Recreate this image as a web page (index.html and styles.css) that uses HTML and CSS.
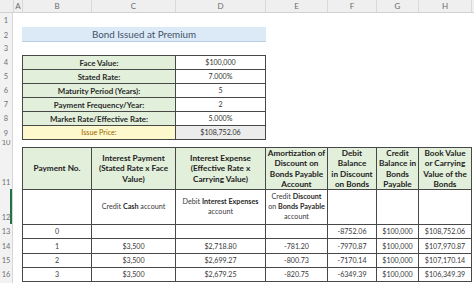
FILE: index.html
```html
<!DOCTYPE html>
<html>
<head>
<meta charset="utf-8">
<link rel="stylesheet" href="styles.css">
</head>
<body>
<div class="colhead">
  <div class="corner"></div>
  <div class="ch wa">A</div>
  <div class="ch wb">B</div>
  <div class="ch wc">C</div>
  <div class="ch wd">D</div>
  <div class="ch we">E</div>
  <div class="ch wf">F</div>
  <div class="ch wg">G</div>
  <div class="ch wh">H</div>
  <div class="ch wi"></div>
</div>
<div class="main">
  <div class="rowhead">
    <div class="rn r14">1</div>
    <div class="rn r15">2</div>
    <div class="rn r13">3</div>
    <div class="rn r14">4</div>
    <div class="rn r14">5</div>
    <div class="rn r14">6</div>
    <div class="rn r14">7</div>
    <div class="rn r14">8</div>
    <div class="rn r15">9</div>
    <div class="rn r7">10</div>
    <div class="rn r42">11</div>
    <div class="rn r35 sel">12</div>
    <div class="rn r14">13</div>
    <div class="rn r15">14</div>
    <div class="rn r14">15</div>
    <div class="rn r14">16</div>
    <div class="rn r14"></div>
  </div>
  <div class="sheet">
    <div class="title">Bond Issued at Premium</div>
    <div class="info">
      <div class="lbl">Face Value:</div><div class="val">$100,000</div>
      <div class="lbl">Stated Rate:</div><div class="val">7.000%</div>
      <div class="lbl">Maturity Period (Years):</div><div class="val">5</div>
      <div class="lbl">Payment Frequency/Year:</div><div class="val">2</div>
      <div class="lbl">Market Rate/Effective Rate:</div><div class="val">5.000%</div>
      <div class="lbl issue">Issue Price:</div><div class="val price">$108,752.06</div>
    </div>
    <div class="sched">
      <div class="hd">Payment No.</div>
      <div class="hd"><span>Interest Payment<br>(Stated Rate x Face<br>Value)</span></div>
      <div class="hd"><span>Interest Expense<br>(Effective Rate x<br>Carrying Value)</span></div>
      <div class="hd"><span>Amortization of<br>Discount on<br>Bonds Payable<br>Account</span></div>
      <div class="hd"><span>Debit<br>Balance<br>in Discount<br>on Bonds</span></div>
      <div class="hd"><span>Credit<br>Balance in<br>Bonds<br>Payable</span></div>
      <div class="hd"><span>Book Value<br>or Carrying<br>Value of the<br>Bonds</span></div>

      <div class="td"></div>
      <div class="td note"><span>Credit <b>Cash</b> account</span></div>
      <div class="td note"><span>Debit <b>Interest Expenses</b><br>account</span></div>
      <div class="td note"><span>Credit <b>Discount</b><br>on <b>Bonds Payable</b><br>account</span></div>
      <div class="td"></div>
      <div class="td"></div>
      <div class="td"></div>

      <div class="td">0</div><div class="td"></div><div class="td"></div><div class="td"></div><div class="td">-8752.06</div><div class="td">$100,000</div><div class="td">$108,752.06</div>
      <div class="td">1</div><div class="td">$3,500</div><div class="td">$2,718.80</div><div class="td">-781.20</div><div class="td">-7970.87</div><div class="td">$100,000</div><div class="td">$107,970.87</div>
      <div class="td">2</div><div class="td">$3,500</div><div class="td">$2,699.27</div><div class="td">-800.73</div><div class="td">-7170.14</div><div class="td">$100,000</div><div class="td">$107,170.14</div>
      <div class="td">3</div><div class="td">$3,500</div><div class="td">$2,679.25</div><div class="td">-820.75</div><div class="td">-6349.39</div><div class="td">$100,000</div><div class="td">$106,349.39</div>
    </div>
  </div>
</div>
</body>
</html>
```
FILE: styles.css
```css
* { box-sizing: border-box; }
html, body { margin: 0; padding: 0; }
body {
  width: 474px;
  height: 283px;
  overflow: hidden;
  background: #ffffff;
  font-family: "Lato", "Liberation Sans", sans-serif;
  color: #333333;
}
.colhead {
  display: flex;
  height: 13px;
  background: #efefef;
  border-bottom: 1px solid #d2d2d2;
}
.corner { width: 13px; flex: none; }
.ch {
  flex: none;
  height: 12px;
  border-left: 1px solid #d9d9d9;
  font-size: 8px;
  line-height: 12px;
  color: #6b6b6b;
  text-align: center;
}
.wa { width: 9px; }
.wb { width: 69px; }
.wc { width: 84px; }
.wd { width: 90px; }
.we { width: 62px; }
.wf { width: 49px; }
.wg { width: 42px; }
.wh { width: 53px; }
.wi { flex: 1; }
.main { display: flex; }
.rowhead {
  width: 13px;
  flex: none;
  background: #f2f2f2;
  border-right: 1px solid #d6d6d6;
  height: 270px;
}
.rn {
  display: flex;
  align-items: flex-end;
  justify-content: center;
  overflow: hidden;
  font-size: 7.5px;
  line-height: 9px;
  color: #707070;
  padding-bottom: 2px;
}
.r7 { height: 7px; padding-bottom: 0; }
.r13 { height: 13px; }
.r14 { height: 14px; }
.r15 { height: 15px; }
.r35 { height: 35px; }
.r42 { height: 42px; }
.sel { box-shadow: inset -2px 0 0 #217346; }
.sheet {
  flex: 1;
  padding-left: 9px;
  padding-top: 14px;
}
.title {
  width: 244px;
  height: 15px;
  background: #dce9f7;
  border-bottom: 1px solid #b9cfe8;
  color: #44546a;
  font-size: 9.8px;
  line-height: 14px;
  text-align: center;
}
.info {
  margin-top: 13px;
  display: grid;
  grid-template-columns: 152px 89px;
  grid-auto-rows: 13px;
  gap: 1px;
  padding: 1px;
  background: #484848;
  width: 244px;
}
.info > div {
  display: flex;
  align-items: center;
  justify-content: center;
  white-space: nowrap;
}
.lbl { background: #e2efda; font-weight: bold; color: #2a2a2a; font-size: 7.9px; }
.val { background: #ffffff; font-size: 7.1px; }
.lbl.issue { background: #fdf9cc; font-weight: normal; color: #9c6500; font-size: 7.2px; }
.val.price { background: #ececec; }
.sched {
  margin-top: 7px;
  display: grid;
  grid-template-columns: 68px 83px 89px 61px 48px 41px 52px;
  grid-template-rows: 41px 34px 13px 14px 13px 13px;
  gap: 1px;
  padding: 1px;
  background: #484848;
  width: 450px;
}
.sched > div {
  display: flex;
  align-items: center;
  justify-content: center;
  text-align: center;
  white-space: nowrap;
  background: #ffffff;
  font-size: 7.1px;
  color: #383838;
}
.sched > .hd {
  background: #e2efda;
  font-weight: bold;
  color: #222222;
  font-size: 8.2px;
  line-height: 10.5px;
}
.sched > .note { line-height: 10px; font-size: 7.2px; color: #3a3a3a; }
.note b { color: #2a2a2a; }
```
